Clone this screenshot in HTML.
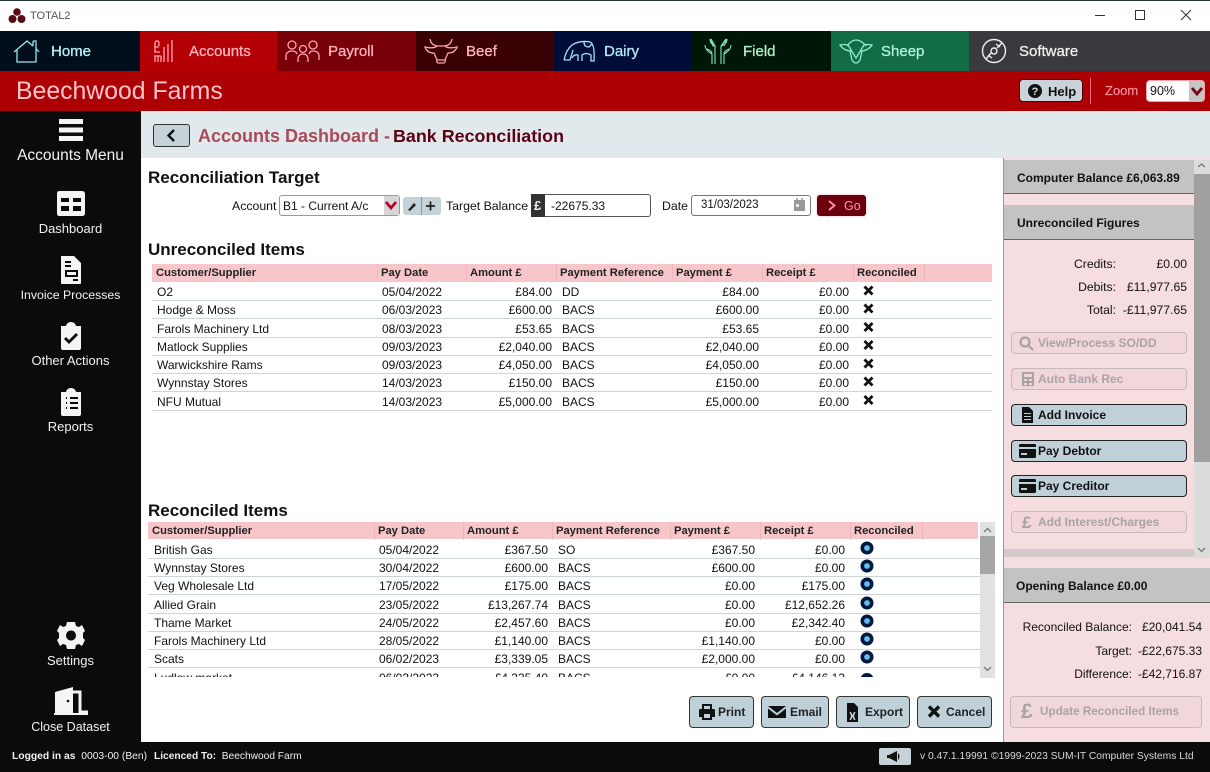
<!DOCTYPE html>
<html><head><meta charset="utf-8"><title>TOTAL2</title>
<style>
html,body{margin:0;padding:0}
body{width:1210px;height:772px;position:relative;overflow:hidden;background:#fff;font-family:"Liberation Sans",sans-serif;color:#111}
.b{position:absolute}
.t{position:absolute;white-space:nowrap;line-height:16px;font-size:12px}
.n{font-size:15px;top:44px;-webkit-text-stroke:.3px currentColor}
.s{color:#f2f2f2;font-size:13px;width:141px;left:0;text-align:center}
.h{font-size:17px;font-weight:bold;color:#111;line-height:20px}
.hd{position:absolute;background:#f7c6ca;height:18px}
.hd span{position:absolute;top:0;height:18px;line-height:18px;font-size:11.2px;font-weight:bold;color:#222;padding-left:3px;border-left:1px solid #eeb5ba;box-sizing:border-box;white-space:nowrap}
.r{position:absolute;height:18px;border-bottom:1px solid #cfd4d8;box-sizing:content-box}
.r span{position:absolute;top:1px;line-height:18px;font-size:12px;white-space:nowrap;color:#111}
.a{text-align:right}
.btn{position:absolute;box-sizing:border-box;border-radius:4px;background:#bfd0d8;border:1px solid #222;font-size:12px;font-weight:bold;line-height:20px;color:#111}
.dis{background:#f1d6da;border:1px solid #c9b8bc;color:#a9a3a6}
.act{position:absolute;top:696px;height:32px;box-sizing:border-box;border:1px solid #333;border-radius:4px;background:#bfd0d8;font-size:12px;font-weight:bold;line-height:30px;color:#222}
.g{position:absolute;background:#c3c3c3;border-bottom:1px solid #666;box-sizing:border-box;font-weight:bold;font-size:12px;color:#111}
</style></head><body>

<!-- title bar -->
<div class="b" style="left:0;top:0;width:1210px;height:1px;background:#20343a"></div>
<span class="t" style="left:30px;top:8px;font-size:11px;color:#555">TOTAL2</span>

<!-- nav -->
<div class="b" style="left:0;top:31px;width:140px;height:40px;background:#000d1a"></div>
<div class="b" style="left:140px;top:31px;width:137px;height:40px;background:#b30005"></div>
<div class="b" style="left:277px;top:31px;width:139px;height:40px;background:#780008"></div>
<div class="b" style="left:416px;top:31px;width:138px;height:40px;background:#380003"></div>
<div class="b" style="left:554px;top:31px;width:138px;height:40px;background:#000c38"></div>
<div class="b" style="left:692px;top:31px;width:139px;height:40px;background:#001607"></div>
<div class="b" style="left:831px;top:31px;width:138px;height:40px;background:#126c46"></div>
<div class="b" style="left:969px;top:31px;width:241px;height:40px;background:#3a393d"></div>
<span class="t n" style="left:51px;color:#b3f2fb">Home</span>
<span class="t n" style="left:189px;color:#ffb4bd">Accounts</span>
<span class="t n" style="left:328px;color:#ffb4bd">Payroll</span>
<span class="t n" style="left:466px;color:#ffb4bd">Beef</span>
<span class="t n" style="left:604px;color:#b3ebfb">Dairy</span>
<span class="t n" style="left:743px;color:#aef0c8">Field</span>
<span class="t n" style="left:881px;color:#b0f2dc">Sheep</span>
<span class="t n" style="left:1019px;color:#f0f0f0">Software</span>

<!-- red band -->
<div class="b" style="left:0;top:71px;width:1210px;height:40px;background:#ad0005"></div>
<span class="t" style="left:16px;top:79px;font-size:24.8px;line-height:26px;color:#ffc4cb">Beechwood Farms</span>
<div class="btn" style="left:1019px;top:79px;width:64px;height:23px;background:#c8d4da;border-color:#4a0006;padding-left:28px;line-height:23px;font-size:13px">Help</div>
<div class="b" style="left:1090px;top:78px;width:1px;height:26px;background:#f0707c"></div>
<span class="t" style="left:1105px;top:83px;font-size:13px;color:#ff8d9b;-webkit-text-stroke:.2px currentColor">Zoom</span>
<div class="b" style="left:1146px;top:80px;width:59px;height:22px;background:#fff;border:1px solid #f5a0aa;border-radius:4px;box-sizing:border-box"></div>
<div class="b" style="left:1189px;top:81px;width:15px;height:20px;background:#c5c5c5"></div>
<span class="t" style="left:1150px;top:83px;font-size:12.5px;color:#111">90%</span>

<!-- sidebar -->
<div class="b" style="left:0;top:111px;width:141px;height:631px;background:#0b0b0b"></div>
<span class="t s" style="top:148px;font-size:15.500px">Accounts Menu</span>
<span class="t s" style="top:221px">Dashboard</span>
<span class="t s" style="top:287px;font-size:12.300px">Invoice Processes</span>
<span class="t s" style="top:353px">Other Actions</span>
<span class="t s" style="top:419px">Reports</span>
<span class="t s" style="top:653px">Settings</span>
<span class="t s" style="top:719px;font-size:12.500px">Close Dataset</span>

<!-- title strip -->
<div class="b" style="left:141px;top:111px;width:1069px;height:47px;background:#e2e9ec"></div>
<div class="b" style="left:153px;top:124px;width:37px;height:23px;box-sizing:border-box;background:#c5d2d8;border:1px solid #333;border-radius:3px"></div>
<span class="t" style="left:198px;top:126px;font-size:18px;line-height:21px;font-weight:bold;color:#a84a58">Accounts Dashboard -</span>
<span class="t" style="left:393px;top:126px;font-size:17.900px;line-height:21px;font-weight:bold;color:#5c0014">Bank Reconciliation</span>

<!-- Reconciliation target -->
<span class="t h" style="left:148px;top:168px">Reconciliation Target</span>
<span class="t" style="left:232px;top:198px;font-size:12.300px">Account</span>
<div class="b" style="left:279px;top:195px;width:121px;height:21px;box-sizing:border-box;border:1px solid #999;border-radius:3px;background:#fff"></div>
<div class="b" style="left:384px;top:196px;width:15px;height:19px;background:#d6d6d6"></div>
<span class="t" style="left:283px;top:198px">B1 - Current A/c</span>
<div class="b" style="left:403px;top:197px;width:38px;height:18px;background:#c5d2d8;border-radius:3px"></div>
<div class="b" style="left:421px;top:197px;width:1px;height:18px;background:#8a979d"></div>
<span class="t" style="left:446px;top:198px;font-size:12.300px">Target Balance</span>
<div class="b" style="left:531px;top:194px;width:120px;height:23px;box-sizing:border-box;border:1px solid #555;border-radius:3px;background:#fff"></div>
<div class="b" style="left:531px;top:194px;width:14px;height:23px;background:#333"></div>
<span class="t" style="left:534px;top:198px;font-weight:bold;color:#eee;font-size:13px">£</span>
<span class="t" style="left:551px;top:198px">-22675.33</span>
<span class="t" style="left:662px;top:198px;font-size:12.300px">Date</span>
<div class="b" style="left:691px;top:195px;width:120px;height:21px;box-sizing:border-box;border:1px solid #777;border-radius:3px;background:#fff"></div>
<span class="t" style="left:701px;top:197px;font-size:11.500px">31/03/2023</span>
<div class="b" style="left:817px;top:195px;width:49px;height:21px;background:#6a000c;border-radius:3px;box-shadow:0 0 2px #f7a8b4"></div>
<span class="t" style="left:844px;top:198px;color:#ff9aa8;font-size:12.500px">Go</span>

<!-- Unreconciled -->
<span class="t h" style="left:148px;top:240px">Unreconciled Items</span>
<div class="hd" style="left:152px;top:264px;width:840px">
<span style="left:0;width:225px;border-left:0;padding-left:4px">Customer/Supplier</span><span style="left:225px;width:90px">Pay Date</span><span style="left:314px;width:90px">Amount £</span><span style="left:404px;width:116px">Payment Reference</span><span style="left:520px;width:90px">Payment £</span><span style="left:610px;width:90px">Receipt £</span><span style="left:701px;width:72px;border-right:1px solid #eeb5ba">Reconciled</span>
</div>
<div class="r" style="left:152px;top:282px;width:840px"><span style="left:5px">O2</span><span style="left:230px">05/04/2022</span><span class="a" style="right:440px">£84.00</span><span style="left:410px">DD</span><span class="a" style="right:233px">£84.00</span><span class="a" style="right:143px">£0.00</span></div>
<div class="r" style="left:152px;top:300px;width:840px"><span style="left:5px">Hodge &amp; Moss</span><span style="left:230px">06/03/2023</span><span class="a" style="right:440px">£600.00</span><span style="left:410px">BACS</span><span class="a" style="right:233px">£600.00</span><span class="a" style="right:143px">£0.00</span></div>
<div class="r" style="left:152px;top:319px;width:840px"><span style="left:5px">Farols Machinery Ltd</span><span style="left:230px">08/03/2023</span><span class="a" style="right:440px">£53.65</span><span style="left:410px">BACS</span><span class="a" style="right:233px">£53.65</span><span class="a" style="right:143px">£0.00</span></div>
<div class="r" style="left:152px;top:337px;width:840px"><span style="left:5px">Matlock Supplies</span><span style="left:230px">09/03/2023</span><span class="a" style="right:440px">£2,040.00</span><span style="left:410px">BACS</span><span class="a" style="right:233px">£2,040.00</span><span class="a" style="right:143px">£0.00</span></div>
<div class="r" style="left:152px;top:355px;width:840px"><span style="left:5px">Warwickshire Rams</span><span style="left:230px">09/03/2023</span><span class="a" style="right:440px">£4,050.00</span><span style="left:410px">BACS</span><span class="a" style="right:233px">£4,050.00</span><span class="a" style="right:143px">£0.00</span></div>
<div class="r" style="left:152px;top:373px;width:840px"><span style="left:5px">Wynnstay Stores</span><span style="left:230px">14/03/2023</span><span class="a" style="right:440px">£150.00</span><span style="left:410px">BACS</span><span class="a" style="right:233px">£150.00</span><span class="a" style="right:143px">£0.00</span></div>
<div class="r" style="left:152px;top:392px;width:840px"><span style="left:5px">NFU Mutual</span><span style="left:230px">14/03/2023</span><span class="a" style="right:440px">£5,000.00</span><span style="left:410px">BACS</span><span class="a" style="right:233px">£5,000.00</span><span class="a" style="right:143px">£0.00</span></div>

<!-- Reconciled -->
<span class="t h" style="left:148px;top:501px">Reconciled Items</span>
<div class="hd" style="left:148px;top:522px;width:830px;height:17px">
<span style="left:0;width:226px;border-left:0;padding-left:4px">Customer/Supplier</span><span style="left:226px;width:89px">Pay Date</span><span style="left:315px;width:90px">Amount £</span><span style="left:404px;width:118px">Payment Reference</span><span style="left:522px;width:90px">Payment £</span><span style="left:612px;width:90px">Receipt £</span><span style="left:702px;width:73px;border-right:1px solid #eeb5ba">Reconciled</span>
</div>
<div class="b" style="left:148px;top:540px;width:832px;height:137px;overflow:hidden">
<div class="r" style="left:0;top:0;width:832px"><span style="left:6px">British Gas</span><span style="left:231px">05/04/2022</span><span class="a" style="right:432px">£367.50</span><span style="left:410px">SO</span><span class="a" style="right:225px">£367.50</span><span class="a" style="right:135px">£0.00</span></div>
<div class="r" style="left:0;top:18px;width:832px"><span style="left:6px">Wynnstay Stores</span><span style="left:231px">30/04/2022</span><span class="a" style="right:432px">£600.00</span><span style="left:410px">BACS</span><span class="a" style="right:225px">£600.00</span><span class="a" style="right:135px">£0.00</span></div>
<div class="r" style="left:0;top:36px;width:832px"><span style="left:6px">Veg Wholesale Ltd</span><span style="left:231px">17/05/2022</span><span class="a" style="right:432px">£175.00</span><span style="left:410px">BACS</span><span class="a" style="right:225px">£0.00</span><span class="a" style="right:135px">£175.00</span></div>
<div class="r" style="left:0;top:55px;width:832px"><span style="left:6px">Allied Grain</span><span style="left:231px">23/05/2022</span><span class="a" style="right:432px">£13,267.74</span><span style="left:410px">BACS</span><span class="a" style="right:225px">£0.00</span><span class="a" style="right:135px">£12,652.26</span></div>
<div class="r" style="left:0;top:73px;width:832px"><span style="left:6px">Thame Market</span><span style="left:231px">24/05/2022</span><span class="a" style="right:432px">£2,457.60</span><span style="left:410px">BACS</span><span class="a" style="right:225px">£0.00</span><span class="a" style="right:135px">£2,342.40</span></div>
<div class="r" style="left:0;top:91px;width:832px"><span style="left:6px">Farols Machinery Ltd</span><span style="left:231px">28/05/2022</span><span class="a" style="right:432px">£1,140.00</span><span style="left:410px">BACS</span><span class="a" style="right:225px">£1,140.00</span><span class="a" style="right:135px">£0.00</span></div>
<div class="r" style="left:0;top:109px;width:832px"><span style="left:6px">Scats</span><span style="left:231px">06/02/2023</span><span class="a" style="right:432px">£3,339.05</span><span style="left:410px">BACS</span><span class="a" style="right:225px">£2,000.00</span><span class="a" style="right:135px">£0.00</span></div>
<div class="r" style="left:0;top:128px;width:832px"><span style="left:6px">Ludlow market</span><span style="left:231px">06/03/2023</span><span class="a" style="right:432px">£4,335.40</span><span style="left:410px">BACS</span><span class="a" style="right:225px">£0.00</span><span class="a" style="right:135px">£4,146.13</span></div>
</div>
<div class="b" style="left:980px;top:522px;width:15px;height:156px;background:#e2e2e2"></div>
<div class="b" style="left:980px;top:536px;width:15px;height:38px;background:#a6a6a6"></div>

<!-- action buttons -->
<div class="act" style="left:689px;width:65px;padding-left:28px">Print</div>
<div class="act" style="left:761px;width:68px;padding-left:28px">Email</div>
<div class="act" style="left:836px;width:74px;padding-left:28px">Export</div>
<div class="act" style="left:917px;width:75px;padding-left:28px">Cancel</div>

<!-- right panel -->
<div class="b" style="left:1003px;top:158px;width:207px;height:584px;background:#f5dde0;border-left:1px solid #999;box-sizing:border-box"></div>
<div class="g" style="left:1004px;top:160px;width:190px;height:34px;line-height:36px;padding-left:13px">Computer Balance £6,063.89</div>
<div class="g" style="left:1004px;top:205px;width:190px;height:35px;line-height:36px;padding-left:13px">Unreconciled Figures</div>
<span class="t" style="left:1040px;top:256px;width:76px;text-align:right;font-size:12.200px">Credits:</span><span class="t" style="left:1120px;top:256px;width:67px;text-align:right;font-size:12.200px">£0.00</span>
<span class="t" style="left:1040px;top:279px;width:76px;text-align:right;font-size:12.200px">Debits:</span><span class="t" style="left:1120px;top:279px;width:67px;text-align:right;font-size:12.200px">£11,977.65</span>
<span class="t" style="left:1040px;top:302px;width:76px;text-align:right;font-size:12.200px">Total:</span><span class="t" style="left:1110px;top:302px;width:77px;text-align:right;font-size:12.200px">-£11,977.65</span>
<div class="btn dis" style="left:1011px;top:332px;width:176px;height:22px;padding-left:26px">View/Process SO/DD</div>
<div class="btn dis" style="left:1011px;top:368px;width:176px;height:22px;padding-left:26px">Auto Bank Rec</div>
<div class="btn" style="left:1011px;top:404px;width:176px;height:22px;padding-left:26px">Add Invoice</div>
<div class="btn" style="left:1011px;top:440px;width:176px;height:22px;padding-left:26px">Pay Debtor</div>
<div class="btn" style="left:1011px;top:475px;width:176px;height:22px;padding-left:26px">Pay Creditor</div>
<div class="btn dis" style="left:1011px;top:511px;width:176px;height:22px;padding-left:26px">Add Interest/Charges</div>
<div class="b" style="left:1004px;top:549px;width:190px;height:8px;background:#d2c9cb"></div>
<div class="b" style="left:1194px;top:160px;width:16px;height:398px;background:#dcdcdc"></div>
<div class="b" style="left:1194px;top:174px;width:16px;height:288px;background:#a0a0a0"></div>
<div class="g" style="left:1004px;top:568px;width:206px;height:35px;line-height:36px;padding-left:12px">Opening Balance £0.00</div>
<span class="t" style="left:1010px;top:619px;width:122px;text-align:right">Reconciled Balance:</span><span class="t" style="left:1135px;top:619px;width:67px;text-align:right">£20,041.54</span>
<span class="t" style="left:1010px;top:643px;width:122px;text-align:right">Target:</span><span class="t" style="left:1125px;top:643px;width:77px;text-align:right">-£22,675.33</span>
<span class="t" style="left:1010px;top:666px;width:122px;text-align:right">Difference:</span><span class="t" style="left:1125px;top:666px;width:77px;text-align:right">-£42,716.87</span>
<div class="btn dis" style="left:1010px;top:696px;width:192px;height:32px;padding-left:29px;line-height:30px;font-size:11.700px">Update Reconciled Items</div>

<!-- footer -->
<div class="b" style="left:0;top:742px;width:1210px;height:30px;background:#0b0b0b"></div>
<span class="t" style="left:12px;top:749px;font-size:10.300px;color:#f0f0f0"><b>Logged in as</b>&nbsp; 0003-00 (Ben)</span>
<span class="t" style="left:154px;top:749px;font-size:10.200px;color:#f0f0f0"><b>Licenced To:</b>&nbsp; Beechwood Farm</span>
<div class="b" style="left:879px;top:748px;width:32px;height:17px;background:#c5d2d8;border-radius:2px"></div>
<span class="t" style="left:920px;top:749px;font-size:10.300px;color:#d8d8d8">v 0.47.1.19991 ©1999-2023 SUM-IT Computer Systems Ltd</span>

<!-- icon overlay -->
<svg class="b" style="left:0;top:0;pointer-events:none" width="1210" height="772" viewBox="0 0 1210 772">
<!-- logo -->
<g fill="#5a0a14"><circle cx="17" cy="12" r="3.800"/><circle cx="12.500" cy="19" r="4"/><circle cx="21.500" cy="19" r="4"/></g>
<!-- window controls -->
<path d="M1095 15.500H1105" stroke="#333" fill="none"/>
<rect x="1135.500" y="10.500" width="9" height="9" fill="none" stroke="#333"/>
<path d="M1181 10L1191 20M1191 10L1181 20" stroke="#333" fill="none"/>
<!-- home -->
<g fill="none" stroke="#8fe9f5" stroke-width="1.300"><path d="M14 52L27 41L33 46M33 41H36V48.500L39 52M17 50V62H36V49M33 46V41"/></g>
<!-- accounts -->
<g fill="none" stroke="#ffa4b0" stroke-width="1.300"><path d="M159 46V43.500Q159 40.500 156.500 41Q154.500 41.500 155 44.500V52M154 47H159M154 52H160M155 56V62M158 56V62M161 56V62M164 47V62M168 44V62M172 40V62M154 56H161"/></g>
<!-- payroll -->
<g fill="none" stroke="#ffa4b0" stroke-width="1.300"><circle cx="292" cy="45" r="4"/><circle cx="303" cy="49" r="3.500"/><circle cx="313" cy="45" r="4"/><path d="M286 60V55Q287 51 292 51Q296 51 297 54M298 62V58Q299 54 303 54Q307 54 308 58V62M309 54Q310 51 313 51Q318 51 319 55V60"/></g>
<!-- beef -->
<g fill="none" stroke="#ffa4b0" stroke-width="1.300"><path d="M430 39Q431 45 437 46H445Q451 45 452 39M437 46Q434 49 425 47Q427 53 434 53L437 60Q436 63 439 63H443Q446 63 445 60L448 53Q455 53 457 47Q448 49 445 46M437 60H445"/></g>
<!-- dairy -->
<g fill="none" stroke="#a0e4f8" stroke-width="1.300"><path d="M564 60Q566 50 572 45Q580 40 590 42Q595 44 594 61H591V55Q586 52 582 55V61M578 61V55Q574 54 572 58M564 60H570L573 50M584 42Q584 47 589 47L592 44"/></g>
<!-- field -->
<g fill="none" stroke="#7fe8b8" stroke-width="1.100"><path d="M715 64V46M721 64V46M712 64V54Q712 51 707 49M724 64V54Q724 51 729 49M715 46L711 39L713 46ZM721 46L726 39L724 46M710 39Q710 44 715 46M727 39Q727 44 721 46M705 45Q705 50 712 54M731 45Q731 50 724 54"/></g>
<!-- sheep -->
<g fill="none" stroke="#8cf0d0" stroke-width="1.300"><path d="M847 46Q856 34 866 46M840 45Q843 50 850 51L852 60Q856 66 860 60L862 51Q869 50 872 45Q868 44 864 45L856 58L848 45Q844 44 840 45Z"/></g>
<!-- software -->
<g fill="none" stroke="#eee" stroke-width="1.400"><circle cx="994" cy="51" r="11.500"/><circle cx="994" cy="51" r="3"/><path d="M986 59L991 53M997 48L1002 43M988 55L992 58M996 44L1000 47"/></g>
<!-- help -->
<circle cx="1035" cy="91" r="7" fill="#111"/><text x="1035" y="95" text-anchor="middle" font-size="11" font-weight="bold" font-family="Liberation Sans" fill="#ddd">?</text>
<path d="M1192 88L1197 94L1202 88" fill="none" stroke="#7a0010" stroke-width="2.800"/>
<!-- sidebar icons -->
<path d="M59 119H83V124H59ZM59 127.500H83V132.500H59ZM59 136H83V141H59Z" fill="#f4f4f4"/>
<path fill="#f4f4f4" fill-rule="evenodd" d="M59 191H82Q85 191 85 194V213Q85 216 82 216H59Q57 216 57 213V194Q57 191 59 191ZM61 198V202H69V198ZM73 198V202H81V198ZM61 206V211H69V206ZM73 206V211H81V206Z"/>
<path fill="#f4f4f4" fill-rule="evenodd" d="M61 256H74L81 263V283Q81 284 80 284H62Q61 284 61 283ZM65 261V263H71V261ZM65 265V267H71V265ZM65 270V277H78V270ZM73 279V281H78V279ZM67 272H76V275H67Z"/>
<path fill="#f4f4f4" d="M61 326H66Q67 322 71 322Q75 322 76 326H81V348Q81 350 79 350H63Q61 350 61 348Z"/>
<path d="M65 338L69 342L77 334" fill="none" stroke="#0b0b0b" stroke-width="2.800"/>
<path fill="#f4f4f4" d="M61 392H66Q67 388 71 388Q75 388 76 392H81V414Q81 416 79 416H63Q61 416 61 414Z"/>
<path d="M66 398H67M70 398H78M66 403H67M70 403H78M66 408H67M70 408H78" stroke="#0b0b0b" stroke-width="2" fill="none"/>
<path fill="#f4f4f4" fill-rule="evenodd" d="M67 622H75L76 626L79 627L82 625L85 631L83 633V638L85 640L82 646L79 644L76 645L75 649H67L66 645L63 644L60 646L57 640L59 638V633L57 631L60 625L63 627L66 626ZM71 630.500A5 5 0 1 0 71.010 630.500Z"/>
<path fill="#f4f4f4" d="M55 714V692L73 687V714Z"/><path d="M73 692H80V712H88" fill="none" stroke="#f4f4f4" stroke-width="3"/><path d="M54 714H88" stroke="#f4f4f4" stroke-width="2"/><circle cx="68" cy="701" r="1.300" fill="#0b0b0b"/>
<!-- back chevron -->
<path d="M174 130L168.500 135.500L174 141" fill="none" stroke="#111" stroke-width="2.400"/>
<!-- form icons -->
<path d="M386 202L391 208L396 202" fill="none" stroke="#b8002c" stroke-width="2.800"/>
<path d="M408 210L414 203L416 205L410 211Z" fill="#222"/>
<path d="M426 206H435M430.500 201.500V210.500" stroke="#222" stroke-width="1.800" fill="none"/>
<path d="M794 200H805V211H794Z" fill="#999"/><path d="M797 198V201M802 198V201" stroke="#999" stroke-width="1.500"/><rect x="796" y="204" width="3" height="3" fill="#eee"/>
<path d="M829 201L834.500 205.500L829 210" fill="none" stroke="#ff9aa8" stroke-width="1.800"/>
<!-- X marks -->
<g stroke="#111" stroke-width="2.800" fill="none">
<path d="M864.500 286.500L872.500 294.500M872.500 286.500L864.500 294.500"/>
<path d="M864.500 304.500L872.500 312.500M872.500 304.500L864.500 312.500"/>
<path d="M864.500 323L872.500 331M872.500 323L864.500 331"/>
<path d="M864.500 341L872.500 349M872.500 341L864.500 349"/>
<path d="M864.500 359.500L872.500 367.500M872.500 359.500L864.500 367.500"/>
<path d="M864.500 377.500L872.500 385.500M872.500 377.500L864.500 385.500"/>
<path d="M864.500 396L872.500 404M872.500 396L864.500 404"/>
</g>
<!-- reconciled dots -->
<g fill="#5ec0ee" stroke="#00183f" stroke-width="3.600">
<circle cx="867" cy="548" r="4.700"/><circle cx="867" cy="566" r="4.700"/><circle cx="867" cy="584" r="4.700"/><circle cx="867" cy="603" r="4.700"/><circle cx="867" cy="621" r="4.700"/><circle cx="867" cy="639" r="4.700"/><circle cx="867" cy="657" r="4.700"/>
</g>
<path d="M861 677A6.500 6.500 0 0 1 873 677Z" fill="#00183f"/>
<!-- scroll arrows -->
<path d="M984 532L987.500 528.500L991 532M984 667L987.500 670.500L991 667M1198 167L1201.500 164L1205 167M1198 548L1201.500 551.500L1205 548" fill="none" stroke="#777" stroke-width="1.300"/>
<!-- action icons -->
<g fill="#111">
<path fill-rule="evenodd" d="M702 704H712V709H714Q715 709 715 711V717H712V720H702V717H699V711Q699 709 700 709H702ZM704 706V709H710V706ZM704 714V718H710V714Z"/>
<path d="M768 706H786L777 713ZM768 708.500V718H786V708.500L777 715.500Z"/>
<path fill-rule="evenodd" d="M847 703H854L858 707V722H847ZM849.500 712L851 716L849.500 720H851L852.500 717L854 720H855.500L854 716L855.500 712H854L852.500 715L851 712Z"/>
</g>
<path d="M929 706.500L939 716.500M939 706.500L929 716.500" stroke="#111" stroke-width="3.400" fill="none"/>
<!-- right-panel button icons -->
<g fill="none" stroke="#a5a3a6" stroke-width="2.200"><circle cx="1025" cy="342" r="4.500"/><path d="M1028.500 345.500L1033 350"/></g>
<path fill="#a5a3a6" fill-rule="evenodd" d="M1022 372H1034V386H1022ZM1024 374V377H1032V374ZM1024 379V381H1027V379ZM1029 379V381H1032V379ZM1024 383V385H1027V383ZM1029 383V385H1032V383Z"/>
<path fill="#111" fill-rule="evenodd" d="M1022 407H1029L1033 411V423H1022ZM1024 413V414H1031V413ZM1024 416V417H1031V416ZM1024 419V420H1031V419Z"/>
<path fill="#111" fill-rule="evenodd" d="M1020 444H1035Q1036 444 1036 446V447H1019V446Q1019 444 1020 444ZM1019 449H1036V456Q1036 458 1035 458H1020Q1019 458 1019 456ZM1021 453V455H1027V453Z"/>
<path fill="#111" fill-rule="evenodd" d="M1020 479H1035Q1036 479 1036 481V482H1019V481Q1019 479 1020 479ZM1019 484H1036V491Q1036 493 1035 493H1020Q1019 493 1019 491ZM1021 488V490H1027V488Z"/>
<text x="1022" y="528" font-size="17" font-weight="bold" font-family="Liberation Sans" fill="#a5a3a6">£</text>
<text x="1021" y="718" font-size="21" font-weight="bold" font-family="Liberation Sans" fill="#a5a3a6">£</text>
<path d="M889 755L897 751V762L889 758H887V755ZM898 753Q901 756.500 898 760" fill="#111"/>
</svg>
</body></html>
